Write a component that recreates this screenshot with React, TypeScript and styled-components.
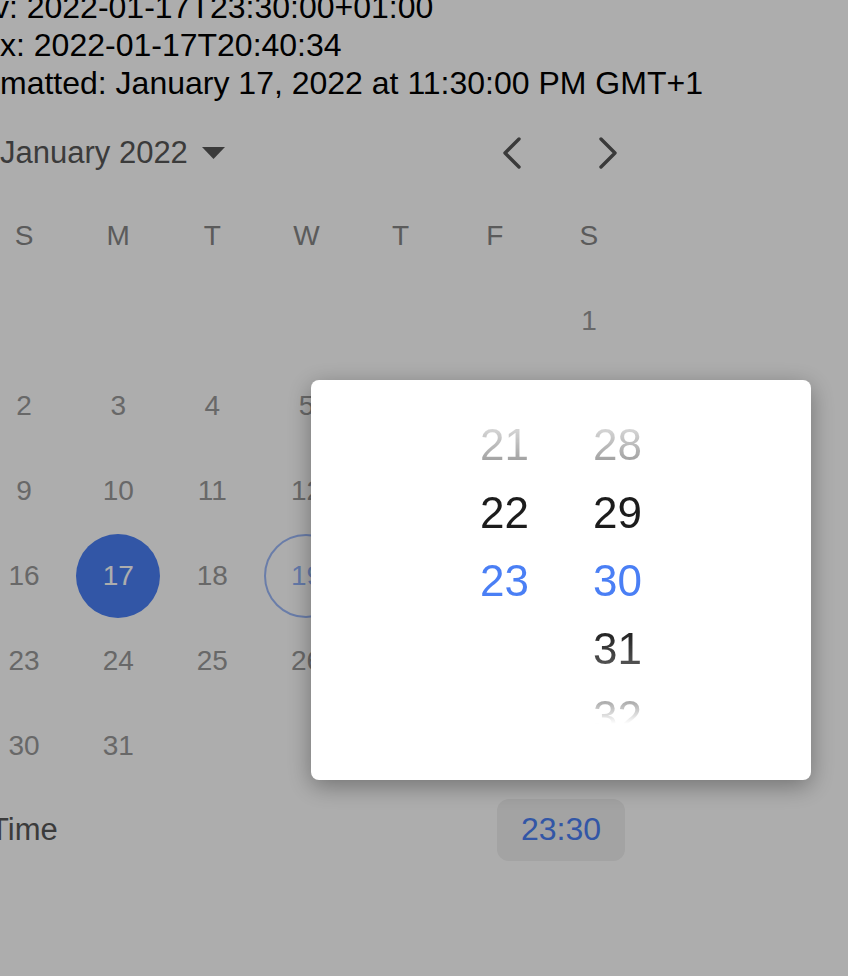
import * as React from "react";
import styled, { createGlobalStyle } from "styled-components";

const BLUE = "#4a7ff5";

const GlobalStyle = createGlobalStyle`
  html, body {
    margin: 0;
    padding: 0;
    background: #ffffff;
    font-family: "Liberation Sans", Arial, Helvetica, sans-serif;
    overflow: hidden;
  }
`;

const weekdays = ["S", "M", "T", "W", "T", "F", "S"];

// January 2022 starts on a Saturday
const days: (number | null)[] = [
  ...Array(6).fill(null),
  ...Array.from({ length: 31 }, (_, i) => i + 1),
];

const hours = ["21", "22", "23", "", ""];
const minutes = ["28", "29", "30", "31", "32"];

const CaretDown = () => (
  <svg width="23" height="12" viewBox="0 0 23 12">
    <path d="M0 0 H23 L11.5 12 Z" fill="#565656" />
  </svg>
);

const Chevron = ({ dir }: { dir: "left" | "right" }) => (
  <svg width="20" height="32" viewBox="0 0 20 32">
    <path
      d={dir === "left" ? "M17 2 L3 16 L17 30" : "M3 2 L17 16 L3 30"}
      fill="none"
      stroke="#565656"
      strokeWidth="3.4"
      strokeLinecap="round"
      strokeLinejoin="round"
    />
  </svg>
);

const App = () => {
  return (
    <>
      <GlobalStyle />
      <Page>
        <Info>
          <div>Dev: 2022-01-17T23:30:00+01:00</div>
          <div>Unix: 2022-01-17T20:40:34</div>
          <div>Formatted: January 17, 2022 at 11:30:00 PM GMT+1</div>
        </Info>

        <Calendar>
          <Header>
            <MonthButton>
              <span>January 2022</span>
              <CaretDown />
            </MonthButton>
            <Nav>
              <NavButton>
                <Chevron dir="left" />
              </NavButton>
              <NavButton>
                <Chevron dir="right" />
              </NavButton>
            </Nav>
          </Header>

          <Weekdays>
            {weekdays.map((d, i) => (
              <span key={i}>{d}</span>
            ))}
          </Weekdays>

          <Days>
            {days.map((d, i) => (
              <DayCell key={i}>
                {d !== null && (
                  <Day $selected={d === 17} $today={d === 19}>
                    {d}
                  </Day>
                )}
              </DayCell>
            ))}
          </Days>

          <TimeRow>
            <TimeLabel>Time</TimeLabel>
            <TimeChip>23:30</TimeChip>
          </TimeRow>
        </Calendar>

        <Backdrop />
        <Popover>
          <Wheel>
            <WheelColumn>
              {hours.map((h, i) => (
                <WheelItem key={i} $active={h === "23"}>
                  {h}
                </WheelItem>
              ))}
            </WheelColumn>
            <WheelColumn>
              {minutes.map((m, i) => (
                <WheelItem key={i} $active={m === "30"}>
                  {m}
                </WheelItem>
              ))}
            </WheelColumn>
          </Wheel>
        </Popover>
      </Page>
    </>
  );
};

export default App;

const Page = styled.div`
  position: relative;
  width: 848px;
  height: 976px;
  overflow: hidden;
`;

const Info = styled.div`
  margin: -12px 0 0 -48px;
  font-size: 32px;
  line-height: 38px;
  color: #000;
  white-space: nowrap;
`;

const Calendar = styled.div`
  margin: 6px 0 0 -23px;
  width: 659px;
`;

const Header = styled.div`
  height: 85px;
  box-sizing: border-box;
  padding: 4px 18px 0 23px;
  display: flex;
  align-items: center;
  justify-content: space-between;
`;

const MonthButton = styled.div`
  display: flex;
  align-items: center;
  gap: 14px;
  font-size: 31px;
  color: #585858;
`;

const Nav = styled.div`
  display: flex;
  gap: 76px;
`;

const NavButton = styled.div`
  display: flex;
  line-height: 0;
`;

const Weekdays = styled.div`
  display: grid;
  grid-template-columns: repeat(7, 1fr);
  height: 85px;
  align-items: center;
  justify-items: center;
  font-size: 28px;
  color: #868686;
`;

const Days = styled.div`
  display: grid;
  grid-template-columns: repeat(7, 1fr);
  grid-auto-rows: 85px;
`;

const DayCell = styled.div`
  display: flex;
  align-items: center;
  justify-content: center;
`;

const Day = styled.div<{ $selected?: boolean; $today?: boolean }>`
  width: 84px;
  height: 84px;
  box-sizing: border-box;
  border-radius: 50%;
  display: flex;
  align-items: center;
  justify-content: center;
  font-size: 28px;
  color: ${(p) =>
    p.$selected ? "#ffffff" : p.$today ? "rgba(74, 127, 245, 0.6)" : "#9a9a9a"};
  background: ${(p) => (p.$selected ? BLUE : "transparent")};
  border: ${(p) => (p.$today ? "2px solid rgba(74, 127, 245, 0.55)" : "none")};
`;

const TimeRow = styled.div`
  height: 80px;
  box-sizing: border-box;
  padding: 3px 11px 0 13px;
  display: flex;
  align-items: center;
  justify-content: space-between;
`;

const TimeLabel = styled.span`
  font-size: 31px;
  color: #585858;
`;

const TimeChip = styled.div`
  width: 128px;
  height: 62px;
  border-radius: 12px;
  background: #f0f0f0;
  color: ${BLUE};
  font-size: 32px;
  display: flex;
  align-items: center;
  justify-content: center;
`;

const Backdrop = styled.div`
  position: fixed;
  inset: 0;
  background: rgba(0, 0, 0, 0.32);
`;

const Popover = styled.div`
  position: fixed;
  left: 311px;
  top: 380px;
  width: 500px;
  height: 400px;
  background: #ffffff;
  border-radius: 8px;
  box-shadow: 0 6px 24px rgba(0, 0, 0, 0.35);
  display: flex;
  align-items: center;
  justify-content: center;
`;

const Wheel = styled.div`
  display: flex;
  gap: 33px;
  height: 340px;
  margin-top: 1px;
  -webkit-mask-image: linear-gradient(
    to bottom,
    rgba(0, 0, 0, 0.1) 0%,
    rgba(0, 0, 0, 0.2) 6%,
    rgba(0, 0, 0, 0.42) 15%,
    #000 24%,
    #000 64%,
    rgba(0, 0, 0, 0.75) 75%,
    rgba(0, 0, 0, 0.4) 85%,
    transparent 92%
  );
  mask-image: linear-gradient(
    to bottom,
    rgba(0, 0, 0, 0.1) 0%,
    rgba(0, 0, 0, 0.2) 6%,
    rgba(0, 0, 0, 0.42) 15%,
    #000 24%,
    #000 64%,
    rgba(0, 0, 0, 0.75) 75%,
    rgba(0, 0, 0, 0.4) 85%,
    transparent 92%
  );
`;

const WheelColumn = styled.div`
  width: 80px;
  display: flex;
  flex-direction: column;
`;

const WheelItem = styled.div<{ $active?: boolean }>`
  height: 68px;
  display: flex;
  align-items: center;
  justify-content: center;
  font-size: 44px;
  color: ${(p) => (p.$active ? BLUE : "#1c1c1c")};
`;
